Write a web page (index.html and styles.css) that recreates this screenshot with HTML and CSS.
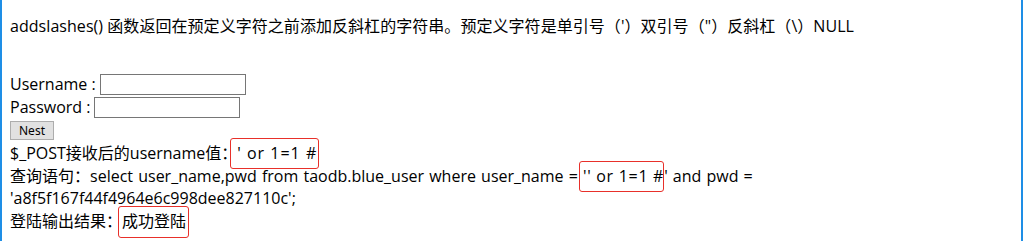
FILE: index.html
```html
<!DOCTYPE html>
<html lang="zh">
<head>
<meta charset="utf-8">
<link rel="stylesheet" href="styles.css">
</head>
<body>
<div class="frame">
  <p class="intro">addslashes() 函数返回在预定义字符之前添加反斜杠的字符串。预定义字符是单引号（'）双引号（"）反斜杠（\）NULL</p>
  <form class="login">
    <div class="row">Username :<input class="field" type="text"></div>
    <div class="row">Password :<input class="field" type="password"></div>
    <div class="row"><button class="btn" type="button">Nest</button></div>
  </form>
  <div class="out">
    <div class="line">$_POST接收后的username值<span class="pc">：</span><span class="mark m1">' or 1=1 #</span></div>
    <div class="line query">查询语句<span class="pc">：</span>select user_name,pwd from taodb.blue_user where user_name = <span class="mark m2">'' or 1=1 #</span>' and pwd = 'a8f5f167f44f4964e6c998dee827110c';</div>
    <div class="line">登陆输出结果<span class="pc">：</span><span class="mark m3">成功登陆</span></div>
  </div>
</div>
</body>
</html>
```
FILE: styles.css
```css
html, body {
  margin: 0;
  padding: 0;
  background: #fff;
}
.frame {
  box-sizing: border-box;
  width: 1023px;
  height: 241px;
  border-left: 2px solid #1e8ee6;
  border-right: 2px solid #1e8ee6;
  padding: 16px 8px 0 8px;
  font-family: "Open Sans", "Noto Sans CJK SC", sans-serif;
  font-size: 16px;
  line-height: 21px;
  color: #000;
}
.intro {
  margin: 0 0 36px 0;
  letter-spacing: 0.05px;
}
.login {
  margin: 0;
}
.row {
  display: flex;
  align-items: center;
  height: 23px;
}
.row:last-child {
  height: 22px;
}
.field {
  box-sizing: border-box;
  width: 146px;
  height: 21px;
  border: 1px solid #767676;
  padding: 0 2px;
  margin: 0 0 0 4px;
  font-size: 13px;
}
.btn {
  box-sizing: border-box;
  height: 19px;
  padding: 0 8px;
  margin: 0;
  border: 1px solid #adadad;
  background: #e1e1e1;
  font-family: "Noto Sans", sans-serif;
  font-size: 12px;
  line-height: 17px;
}
.line {
  line-height: 22px;
}
.query {
  word-spacing: 1px;
}
.pc {
  font-family: "Noto Sans CJK TC", sans-serif;
}
.mark {
  position: relative;
}
.m1 {
  letter-spacing: 1px;
}
.m2 {
  letter-spacing: 0.7px;
  word-spacing: 0;
}
.mark::after {
  content: "";
  position: absolute;
  border: 1.5px solid #e8302a;
  border-radius: 3px;
}
.m1::after { left: -7px; right: -2px; top: -4px; bottom: -5px; }
.m2::after { left: -4px; right: 0px; top: -4px; bottom: -5px; }
.m3::after { left: -4px; right: -3px; top: -4px; bottom: -6px; }
```
